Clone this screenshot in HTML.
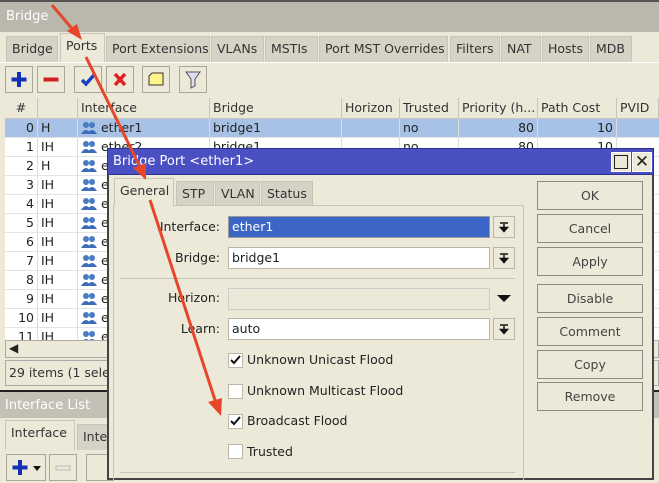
<!DOCTYPE html>
<html><head><meta charset="utf-8"><style>
*{box-sizing:border-box;margin:0;padding:0}
body{width:659px;height:480px;overflow:hidden;background:#ece9d8;font-family:"DejaVu Sans","Liberation Sans",sans-serif;font-size:12.5px;color:#222;position:relative}
.a{position:absolute}
.tab{position:absolute;top:36px;height:26px;background:#d6d3c6;border:1px solid #c8c5b8;border-bottom:none;padding:4px 5px 0;white-space:nowrap;color:#333}
.tb{position:absolute;top:66px;width:28px;height:27px;border:1px solid #a9a69a;background:#ece9d8}
.hd{position:absolute;top:98px;height:21px;border-right:1px solid #c8c5b8;padding:2px 3px;white-space:nowrap;overflow:hidden;color:#333}
.row{position:absolute;left:5px;width:654px;height:19px;border-bottom:1px solid #e4e4e4;background:#fff}
.c{position:absolute;top:0;height:19px;padding:1px 3px;white-space:nowrap;overflow:hidden;border-right:1px solid #ddd}
.inp{position:absolute;left:228px;width:262px;height:22px;background:#fff;border:1px solid #b9b6aa;padding:2px 3px}
.dd{position:absolute;left:493px;width:22px;height:22px;border:1px solid #b9b6aa;background:#ece9d8}
.lbl{position:absolute;width:110px;left:110px;text-align:right}
.btn{position:absolute;left:537px;width:106px;height:29px;border:1px solid #8d8a80;background:#ece9d8;text-align:center;line-height:27px;color:#444}
.cb{position:absolute;left:228px;width:15px;height:15px;border:1px solid #b9b6aa;background:#fff}
.cbt{position:absolute;left:247px}
</style></head><body>
<div class="a" style="left:0;top:0;width:659px;height:32px;background:#bab7ad;border-top:2px solid #555"></div>
<div class="a" style="left:6px;top:9px;color:#fff;font-size:13px">Bridge</div>
<div class="a" style="left:0;top:32px;width:659px;height:448px;background:#ece9d8"></div>
<div class="tab" style="left:6px;width:52px">Bridge</div>
<div class="tab" style="left:60px;top:33px;height:30px;width:45px;background:#ece9d8">Ports</div>
<div class="tab" style="left:106px;width:104px">Port Extensions</div>
<div class="tab" style="left:211px;width:53px">VLANs</div>
<div class="tab" style="left:265px;width:53px">MSTIs</div>
<div class="tab" style="left:319px;width:129px">Port MST Overrides</div>
<div class="tab" style="left:450px;width:50px">Filters</div>
<div class="tab" style="left:501px;width:40px">NAT</div>
<div class="tab" style="left:542px;width:47px">Hosts</div>
<div class="tab" style="left:590px;width:42px">MDB</div>
<div class="a" style="left:0;top:62px;width:659px;height:1px;background:#fff"></div>
<div class="tb" style="left:5px"><svg width="26" height="25"><path d="M13 5v15M5.5 12.5h15" stroke="#1530b8" stroke-width="4"/></svg></div>
<div class="tb" style="left:37px"><svg width="26" height="25"><path d="M5.5 12.5h15" stroke="#d02020" stroke-width="4"/></svg></div>
<div class="tb" style="left:74px"><svg width="26" height="25"><path d="M7 13l4 4 8-9" stroke="#1a40c0" stroke-width="3.5" fill="none"/></svg></div>
<div class="tb" style="left:106px"><svg width="26" height="25"><path d="M8 7l10 11M18 7L8 18" stroke="#e02020" stroke-width="3.5"/></svg></div>
<div class="tb" style="left:142px"><svg width="26" height="25"><path d="M6 9l3-3h11v12H6z" fill="#fff48a" stroke="#333"/></svg></div>
<div class="tb" style="left:179px"><svg width="26" height="25"><path d="M6 5h14l-5 7v7l-4 2v-9z" fill="#dde" stroke="#555"/></svg></div>
<div class="a" style="left:5px;top:97px;width:654px;height:243px;background:#fff;border-left:1px solid #999"></div>
<div class="a" style="left:5px;top:97px;width:654px;height:22px;background:#ece9d8;border-bottom:1px solid #c8c5b8"></div>
<div class="hd" style="left:5px;width:33px;text-align:center">#</div>
<div class="hd" style="left:38px;width:40px"></div>
<div class="hd" style="left:78px;width:132px">Interface</div>
<div class="hd" style="left:210px;width:132px">Bridge</div>
<div class="hd" style="left:342px;width:58px">Horizon</div>
<div class="hd" style="left:400px;width:59px">Trusted</div>
<div class="hd" style="left:459px;width:79px">Priority (h...</div>
<div class="hd" style="left:538px;width:79px">Path Cost</div>
<div class="hd" style="left:617px;width:42px">PVID</div>
<div id="rows"></div>
<script>
var f=["H","IH","H","IH","IH","IH","IH","IH","IH","IH","IH","IH"],h="";
for(var i=0;i<12;i++){var y=119+i*19,s=i==0;
h+='<div class="row" style="top:'+y+'px;'+(s?'background:#a7c2e6':'')+'">'+
'<div class="c" style="left:0;width:33px;text-align:right">'+i+'</div>'+
'<div class="c" style="left:33px;width:40px">'+f[i]+'</div>'+
'<div class="c" style="left:73px;width:132px"><svg width="16" height="13" style="vertical-align:-2px"><circle cx="5" cy="4" r="3" fill="#4a7cc4"/><circle cx="11" cy="4" r="3" fill="#4a7cc4"/><path d="M0 13q5-8 10 0M6 13q5-8 10 0" fill="#3d6cb8"/></svg> ether'+(i+1)+'</div>'+
'<div class="c" style="left:205px;width:132px">bridge1</div>'+
'<div class="c" style="left:337px;width:58px"></div>'+
'<div class="c" style="left:395px;width:59px">no</div>'+
'<div class="c" style="left:454px;width:79px;text-align:right">80</div>'+
'<div class="c" style="left:533px;width:79px;text-align:right">10</div></div>';}
document.getElementById('rows').innerHTML=h;
</script>
<div class="a" style="left:5px;top:340px;width:654px;height:18px;background:#ece9d8;border:1px solid #aaa"></div>
<div class="a" style="left:9px;top:341px;font-size:12px">&#9664;</div>
<div class="a" style="left:5px;top:360px;width:654px;height:26px;border:1px solid #aaa;background:#ece9d8"></div>
<div class="a" style="left:9px;top:365px;color:#333">29 items (1 selected)</div>
<div class="a" style="left:0;top:390px;width:659px;height:2px;background:#222"></div>
<div class="a" style="left:0;top:392px;width:659px;height:26px;background:#c3c0b6"></div>
<div class="a" style="left:5px;top:398px;color:#fff;font-size:13px">Interface List</div>
<div class="tab" style="left:5px;top:420px;height:30px;width:70px;background:#ece9d8">Interface</div>
<div class="tab" style="left:77px;top:424px;width:60px">Interface</div>
<div class="tb" style="left:6px;top:454px;width:40px"><svg width="38" height="25"><path d="M13 5v15M5.5 12.5h15" stroke="#1530b8" stroke-width="4"/><path d="M26 11h8l-4 5z" fill="#111"/></svg></div>
<div class="tb" style="left:49px;top:454px"><svg width="26" height="25"><rect x="6" y="11" width="14" height="4" fill="none" stroke="#bbb"/></svg></div>
<div class="tb" style="left:86px;top:454px"></div>
<div class="a" style="left:107px;top:148px;width:547px;height:332px;background:#ece9d8;border:2px solid #444;border-top:none"></div>
<div class="a" style="left:107px;top:148px;width:547px;height:27px;background:#4a4fc2;border:1px solid #2a2f90"></div>
<div class="a" style="left:113px;top:154px;color:#fff;font-size:13px">Bridge Port &lt;ether1&gt;</div>
<div class="a" style="left:611px;top:152px;width:20px;height:20px;border:1px solid #fff;background:#ece9d8"><div style="margin:2px;width:14px;height:14px;border:1.5px solid #222"></div></div>
<div class="a" style="left:632px;top:152px;width:20px;height:20px;border:1px solid #fff;background:#ece9d8;text-align:center;font-size:17px;line-height:18px">✕</div>
<div class="a" style="left:113px;top:205px;width:411px;height:275px;border:1px solid #c8c5b8;border-bottom:none"></div>
<div class="tab" style="left:114px;top:178px;height:28px;width:60px;background:#ece9d8;border-color:#c8c5b8">General</div>
<div class="tab" style="left:176px;top:181px;height:24px;width:38px">STP</div>
<div class="tab" style="left:215px;top:181px;height:24px;width:45px">VLAN</div>
<div class="tab" style="left:261px;top:181px;height:24px;width:52px">Status</div>
<div class="lbl" style="top:219px">Interface:</div>
<div class="inp" style="top:216px;background:#3d65c6;color:#fff;border-color:#999">ether1</div>
<div class="dd" style="top:216px"><svg width="20" height="20"><path d="M6 6h8M10 7v7M6.5 10.5l3.5 4 3.5-4z" stroke="#111" stroke-width="1.5" fill="#111"/></svg></div>
<div class="lbl" style="top:250px">Bridge:</div>
<div class="inp" style="top:247px">bridge1</div>
<div class="dd" style="top:247px"><svg width="20" height="20"><path d="M6 6h8M10 7v7M6.5 10.5l3.5 4 3.5-4z" stroke="#111" stroke-width="1.5" fill="#111"/></svg></div>
<div class="a" style="left:120px;top:278px;width:395px;height:1px;background:#c8c5b8"></div>
<div class="lbl" style="top:290px">Horizon:</div>
<div class="inp" style="top:288px;background:#ece9d8;border-color:#ccc"></div>
<div class="a" style="left:497px;top:295px;width:0;height:0;border-left:7px solid transparent;border-right:7px solid transparent;border-top:7px solid #111"></div>
<div class="lbl" style="top:321px">Learn:</div>
<div class="inp" style="top:318px">auto</div>
<div class="dd" style="top:318px"><svg width="20" height="20"><path d="M6 6h8M10 7v7M6.5 10.5l3.5 4 3.5-4z" stroke="#111" stroke-width="1.5" fill="#111"/></svg></div>
<div class="cb" style="top:353px"><svg width="13" height="13"><path d="M2 6l3 3 6-7" stroke="#111" stroke-width="2" fill="none"/></svg></div><div class="cbt" style="top:352px">Unknown Unicast Flood</div>
<div class="cb" style="top:384px"></div><div class="cbt" style="top:383px">Unknown Multicast Flood</div>
<div class="cb" style="top:414px"><svg width="13" height="13"><path d="M2 6l3 3 6-7" stroke="#111" stroke-width="2" fill="none"/></svg></div><div class="cbt" style="top:413px">Broadcast Flood</div>
<div class="cb" style="top:444px"></div><div class="cbt" style="top:444px">Trusted</div>
<div class="a" style="left:120px;top:472px;width:395px;height:1px;background:#c8c5b8"></div>
<div class="btn" style="top:181px">OK</div>
<div class="btn" style="top:214px">Cancel</div>
<div class="btn" style="top:247px">Apply</div>
<div class="btn" style="top:284px">Disable</div>
<div class="btn" style="top:317px">Comment</div>
<div class="btn" style="top:350px">Copy</div>
<div class="btn" style="top:382px">Remove</div>
<svg class="a" style="left:0;top:0" width="659" height="480">
<g stroke="#e8462a" stroke-width="3" fill="#e8462a">
<line x1="52" y1="5" x2="74" y2="31"/>
<polygon points="82,40 67,31 77,24" stroke="none"/>
<line x1="86" y1="57" x2="140" y2="167"/>
<polygon points="146,180 133,168 146,163" stroke="none"/>
<line x1="150" y1="200" x2="215" y2="400"/>
<polygon points="221,416 208,402 222,398" stroke="none"/>
</g></svg>
</body></html>
